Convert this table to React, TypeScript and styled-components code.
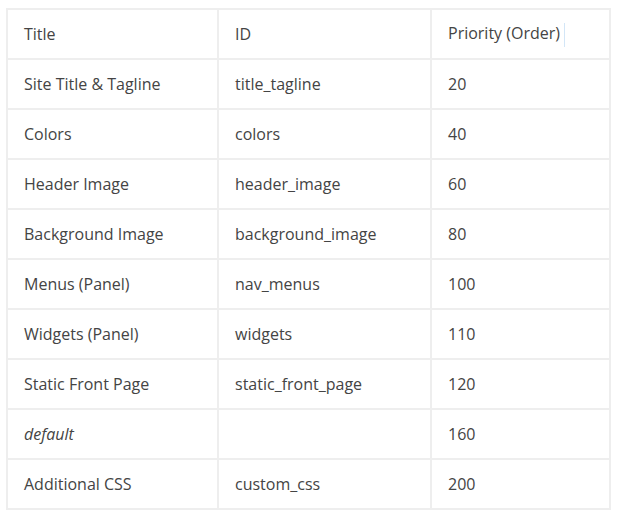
import React from "react";
import styled, { createGlobalStyle } from "styled-components";

const GlobalStyle = createGlobalStyle`
  html, body {
    margin: 0;
    padding: 0;
    background: #ffffff;
  }
  body {
    font-family: "Open Sans", "Liberation Sans", sans-serif;
  }
`;

const Page = styled.div`
  padding: 8px 0 0 6px;
`;

const Table = styled.table`
  width: 605px;
  border-collapse: separate;
  border-spacing: 0;
  border-top: 2px solid #eeeeee;
  border-left: 2px solid #eeeeee;
  table-layout: fixed;
  font-size: 16px;
  color: #444444;
`;

const Cell = styled.td<{ $italic?: boolean }>`
  height: 48px;
  padding: 0 0 0 16px;
  border-right: 2px solid #eeeeee;
  border-bottom: 2px solid #eeeeee;
  vertical-align: middle;
  text-align: left;
  font-weight: 400;
  font-style: ${(p) => (p.$italic ? "italic" : "normal")};
  line-height: 24px;
  white-space: nowrap;
`;

const HeadCell = styled(Cell).attrs({ as: "th" })``;

const Caret = styled.span`
  display: inline-block;
  width: 1px;
  height: 24px;
  margin-left: 4px;
  vertical-align: middle;
  background: #d3e6f7;
`;

const rows: { title: string; id: string; priority: number; italic?: boolean }[] = [
  { title: "Site Title & Tagline", id: "title_tagline", priority: 20 },
  { title: "Colors", id: "colors", priority: 40 },
  { title: "Header Image", id: "header_image", priority: 60 },
  { title: "Background Image", id: "background_image", priority: 80 },
  { title: "Menus (Panel)", id: "nav_menus", priority: 100 },
  { title: "Widgets (Panel)", id: "widgets", priority: 110 },
  { title: "Static Front Page", id: "static_front_page", priority: 120 },
  { title: "default", id: "", priority: 160, italic: true },
  { title: "Additional CSS", id: "custom_css", priority: 200 },
];

const App = () => {
  return (
    <Page>
      <GlobalStyle />
      <Table>
        <colgroup>
          <col style={{ width: 211 }} />
          <col style={{ width: 213 }} />
          <col style={{ width: 179 }} />
        </colgroup>
        <thead>
          <tr>
            <HeadCell>Title</HeadCell>
            <HeadCell>ID</HeadCell>
            <HeadCell>
              Priority (Order)
              <Caret />
            </HeadCell>
          </tr>
        </thead>
        <tbody>
          {rows.map((r) => (
            <tr key={r.title}>
              <Cell $italic={r.italic}>{r.title}</Cell>
              <Cell>{r.id}</Cell>
              <Cell>{r.priority}</Cell>
            </tr>
          ))}
        </tbody>
      </Table>
    </Page>
  );
};

export default App;
